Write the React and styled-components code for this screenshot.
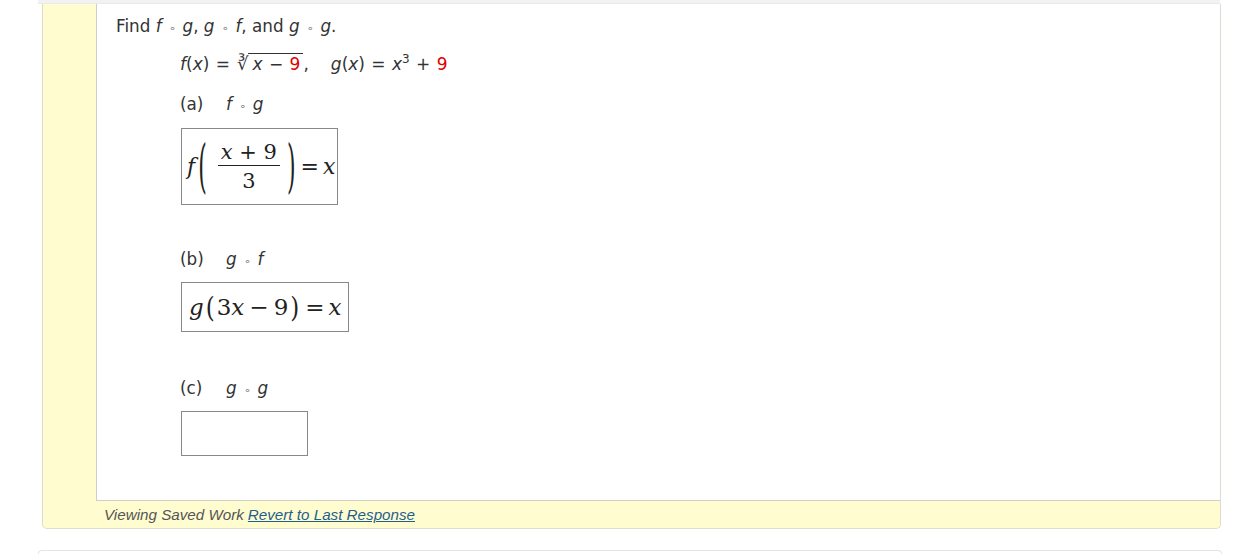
import React from "react";
import styled, { createGlobalStyle } from "styled-components";

const Global = createGlobalStyle`
  html, body { margin: 0; padding: 0; background: #fff; }
  body { font-family: "DejaVu Sans", Verdana, sans-serif; color: #333; }
`;

const TopStrip = styled.div`
  margin-left: 38px;
  width: 1182px;
  height: 4px;
  background: #f2f2f6;
  border-bottom: 1px solid #ecebdc;
  box-sizing: border-box;
`;

const Panel = styled.div`
  margin-left: 42px;
  width: 1179px;
  box-sizing: border-box;
  background: #fffdd0;
  border: 1px solid #dcdcd0;
  border-top: none;
  border-radius: 0 0 5px 5px;
`;

const Body = styled.div`
  display: flex;
`;

const Gutter = styled.div`
  width: 53px;
  flex: none;
`;

const Content = styled.div`
  flex: 1;
  height: 497px;
  box-sizing: border-box;
  background: #fff;
  border-left: 1px solid #cfcfc8;
  border-bottom: 1px solid #cfcfc8;
  padding: 11px 0 0 19px;
`;

const Prompt = styled.div`
  font-size: 16.8px;
  line-height: 22px;
  color: #333;
`;

const Var = styled.i`
  font-style: italic;
`;

const Comp = styled.span`
  font-size: 11px;
  color: #777;
  margin: 0 7px;
`;

const Indented = styled.div`
  margin-left: 64px;
  font-size: 16.8px;
  line-height: 22px;
  color: #333;
`;

const Given = styled(Indented)`
  margin-top: 13px;
  font-size: 17px;
  word-spacing: 1px;
`;

const Gap = styled.span`
  display: inline-block;
  width: ${(p) => p.$w}px;
`;

const Red = styled.span`
  color: #e00000;
`;

const Radical = styled.span`
  font-size: 18px;
  margin-left: 7px;
`;

const Radicand = styled.span`
  border-top: 1px solid #333;
  padding: 0 3px 0 4px;
`;

const Sup = styled.sup`
  font-size: 12px;
  vertical-align: 7px;
  line-height: 0;
`;

const Part = styled(Indented)`
  margin-top: ${(p) => p.$top}px;
`;

const Label = styled.span`
  display: inline-block;
  width: 46px;
`;

const AnswerBox = styled.div`
  margin: ${(p) => p.$top}px 0 0 65px;
  width: ${(p) => p.$w}px;
  height: ${(p) => p.$h}px;
  box-sizing: border-box;
  border: 1px solid #888;
  display: flex;
  align-items: center;
  padding-left: ${(p) => p.$pad || 6}px;
  font-family: "DejaVu Serif", "Liberation Serif", serif;
  font-weight: 300;
  color: #222;
`;

const MathRow = styled.span`
  display: inline-flex;
  align-items: center;
  font-size: ${(p) => p.$size}px;
`;

const MathVar = styled.em`
  font-style: italic;
  font-family: "DejaVu Serif", serif;
`;

const Paren = styled.span`
  display: inline-block;
  transform: scaleY(${(p) => p.$scale});
  margin: 0 ${(p) => p.$gap}px;
  color: #222;
`;

const Frac = styled.span`
  display: inline-flex;
  flex-direction: column;
  align-items: center;
  margin: 0 6px 0 8px;
  font-size: 21px;
  line-height: 24px;
`;

const Numer = styled.span`
  border-bottom: 1px solid #222;
  padding: 0 3px 1px;
`;

const Denom = styled.span`
  padding-top: 3px;
`;

const Op = styled.span`
  margin: 0 ${(p) => p.$gap || 6}px;
`;

const Footer = styled.div`
  height: 27px;
  padding-left: 61px;
  display: flex;
  align-items: center;
  font-family: "Liberation Sans", Arial, sans-serif;
  font-style: italic;
  font-size: 15.2px;
  color: #555;
`;

const Link = styled.a`
  color: #1f5f8f;
  text-decoration: underline;
  margin-left: 4px;
  cursor: pointer;
`;

const NextPanel = styled.div`
  margin: 21px 0 0 38px;
  width: 1182px;
  height: 10px;
  border: 1px solid #e4e4e4;
  border-bottom: none;
  border-radius: 4px 4px 0 0;
`;

function Circ() {
  return <Comp>∘</Comp>;
}

export default function App() {
  return (
    <>
      <Global />
      <TopStrip />
      <Panel>
        <Body>
          <Gutter />
          <Content>
            <Prompt>
              Find <Var>f</Var>
              <Circ />
              <Var>g</Var>, <Var>g</Var>
              <Circ />
              <Var>f</Var>, and <Var>g</Var>
              <Circ />
              <Var>g</Var>.
            </Prompt>
            <Given>
              <Var>f</Var>(<Var>x</Var>) =<Radical>∛</Radical>
              <Radicand>
                <Var>x</Var> − <Red>9</Red>
              </Radicand>
              ,<Gap $w={22} />
              <Var>g</Var>(<Var>x</Var>) = <Var>x</Var>
              <Sup>3</Sup> + <Red>9</Red>
            </Given>

            <Part $top={18}>
              <Label>(a)</Label>
              <Var>f</Var>
              <Circ />
              <Var>g</Var>
            </Part>
            <AnswerBox $top={10} $w={157} $h={77} $pad={5}>
              <MathRow $size={22}>
                <MathVar>f</MathVar>
                <Paren $scale={2.6} $gap={3}>(</Paren>
                <Frac>
                  <Numer>
                    <MathVar>x</MathVar> + 9
                  </Numer>
                  <Denom>3</Denom>
                </Frac>
                <Paren $scale={2.6} $gap={1}>)</Paren>
                <Op $gap={4}>=</Op>
                <MathVar>x</MathVar>
              </MathRow>
            </AnswerBox>

            <Part $top={43}>
              <Label>(b)</Label>
              <Var>g</Var>
              <Circ />
              <Var>f</Var>
            </Part>
            <AnswerBox $top={9} $w={168} $h={50} $pad={7}>
              <MathRow $size={23}>
                <MathVar>g</MathVar>
                <Paren $scale={1.25} $gap={2}>(</Paren>
                3<MathVar>x</MathVar>
                <Op $gap={5}>−</Op>9
                <Paren $scale={1.25} $gap={2}>)</Paren>
                <Op $gap={4}>=</Op>
                <MathVar>x</MathVar>
              </MathRow>
            </AnswerBox>

            <Part $top={45}>
              <Label>(c)</Label>
              <Var>g</Var>
              <Circ />
              <Var>g</Var>
            </Part>
            <AnswerBox $top={9} $w={127} $h={45} />
          </Content>
        </Body>
        <Footer>
          Viewing Saved Work <Link>Revert to Last Response</Link>
        </Footer>
      </Panel>
      <NextPanel />
    </>
  );
}
